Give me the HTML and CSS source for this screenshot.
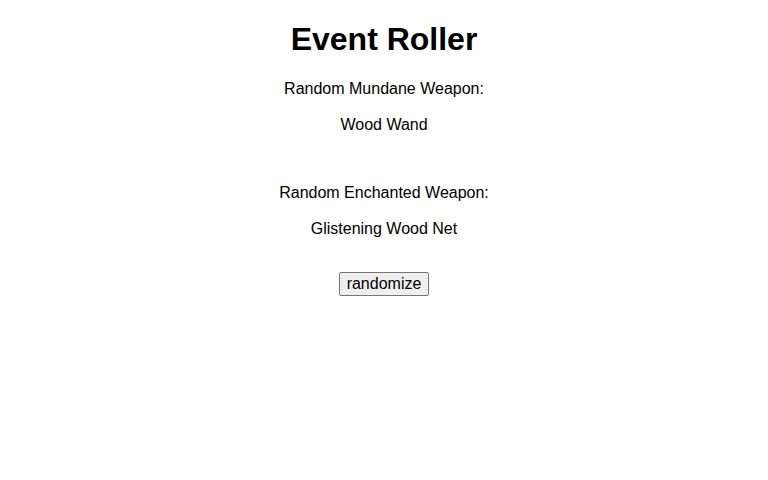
FILE: index.html
```html
<!DOCTYPE html>
<html lang="en">
<head>
<meta charset="utf-8">
<title>Event Roller</title>
<link rel="stylesheet" href="styles.css">
</head>
<body>
<main class="roller">
  <h1 class="roller-title">Event Roller</h1>
  <section class="roll">
    <p class="roll-label">Random Mundane Weapon:</p>
    <p class="roll-result">Wood Wand</p>
  </section>
  <section class="roll">
    <p class="roll-label">Random Enchanted Weapon:</p>
    <p class="roll-result">Glistening Wood Net</p>
  </section>
  <div class="roller-actions">
    <button class="roll-button" type="button">randomize</button>
  </div>
</main>
</body>
</html>
```

FILE: styles.css
```css
body {
  margin: 0;
  font-family: "Liberation Sans", Arial, sans-serif;
  color: #000;
  background: #fff;
}

.roller {
  display: flex;
  flex-direction: column;
  align-items: center;
  text-align: center;
  padding-top: 21px;
}

.roller-title {
  font-size: 32px;
  font-weight: bold;
  line-height: 37px;
  margin: 0 0 22px;
}

.roll {
  display: flex;
  flex-direction: column;
  gap: 18px;
  margin-bottom: 50px;
}

.roll:last-of-type {
  margin-bottom: 34px;
}

.roll p {
  margin: 0;
  font-size: 16px;
  line-height: 18px;
}

.roll-button {
  font-family: "Liberation Sans", Arial, sans-serif;
  font-size: 16px;
  line-height: 18px;
  padding: 2px 7px;
  background: #efefef;
  border: 1px solid #767676;
  border-radius: 2px;
  color: #000;
}
```
